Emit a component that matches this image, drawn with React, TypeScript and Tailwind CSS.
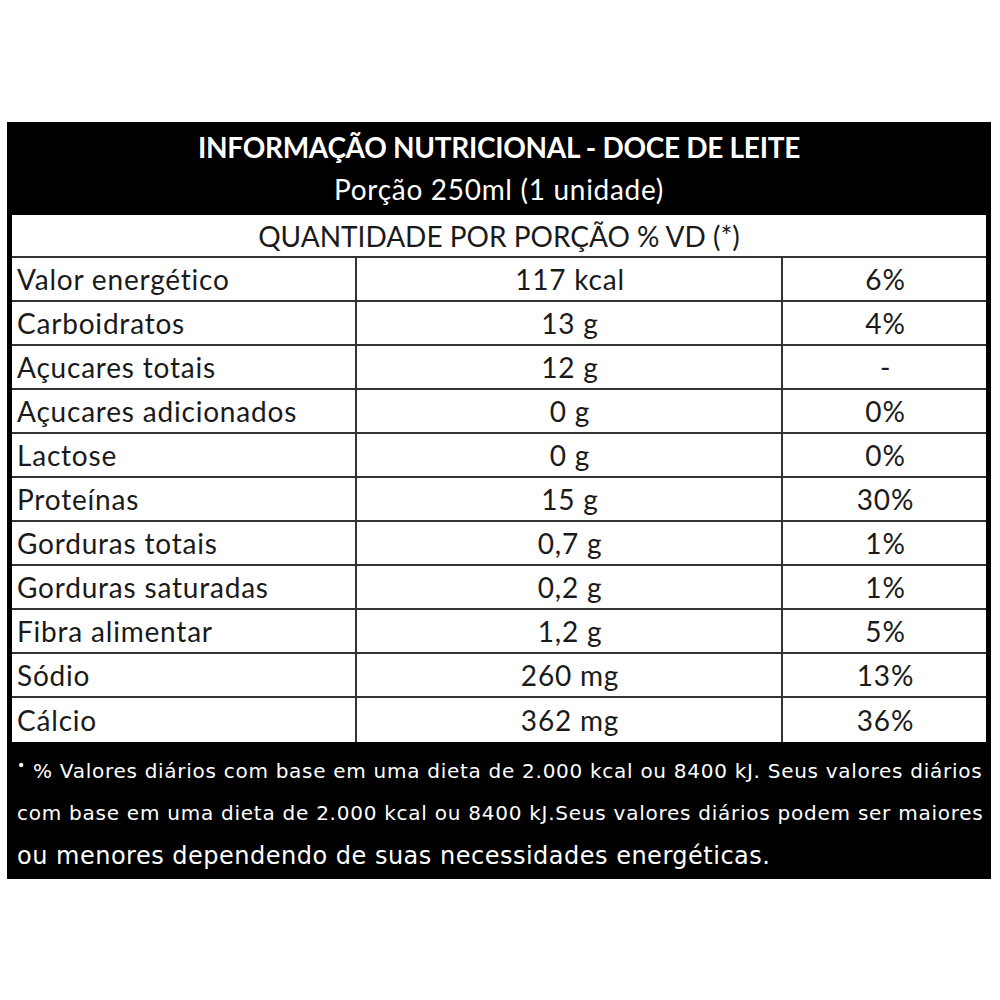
import React from "react";

const rows: [string, string, string][] = [
  ["Valor energético", "117 kcal", "6%"],
  ["Carboidratos", "13 g", "4%"],
  ["Açucares totais", "12 g", "-"],
  ["Açucares adicionados", "0 g", "0%"],
  ["Lactose", "0 g", "0%"],
  ["Proteínas", "15 g", "30%"],
  ["Gorduras totais", "0,7 g", "1%"],
  ["Gorduras saturadas", "0,2 g", "1%"],
  ["Fibra alimentar", "1,2 g", "5%"],
  ["Sódio", "260 mg", "13%"],
  ["Cálcio", "362 mg", "36%"],
];

export default function App() {
  return (
    <div className="w-[1000px] h-[1000px] bg-white pt-[122px] pl-[7px]">
      <div
        className="w-[984px] bg-black px-[5px] pb-[1px]"
        style={{ fontFamily: "Lato, 'Open Sans', sans-serif" }}
      >
        <div className="h-[93px] flex flex-col items-center text-white pt-[8px]">
          <div className="text-[28px] font-bold leading-[34px] tracking-[-0.3px]">
            INFORMAÇÃO NUTRICIONAL - DOCE DE LEITE
          </div>
          <div className="text-[28px] leading-[34px] mt-[8px] tracking-[0.7px]">Porção 250ml (1 unidade)</div>
        </div>
        <div className="bg-white text-[#1a1a1a]">
          <div className="h-[43px] flex items-center justify-center text-[28px] border-b-2 border-[#333]">
            QUANTIDADE POR PORÇÃO % VD (*)
          </div>
          {rows.map((r, i) => (
            <div
              key={i}
              className={`flex h-[44px] text-[28px] tracking-[0.8px] ${i < rows.length - 1 ? "border-b-2 border-[#333]" : ""}`}
            >
              <div className="w-[345px] border-r-2 border-[#333] flex items-center pl-[5px]">{r[0]}</div>
              <div className="w-[426px] border-r-2 border-[#333] flex items-center justify-center pl-[2px]">{r[1]}</div>
              <div className="flex-1 flex items-center justify-center pl-[2px]">{r[2]}</div>
            </div>
          ))}
        </div>
        <div
          className="h-[136px] text-white pl-[5px] pt-[8px]"
          style={{ fontFamily: "'DejaVu Sans', Verdana, sans-serif" }}
        >
          <div className="text-[20px] leading-[42px] whitespace-nowrap tracking-[0.72px]">
            <span className="text-[14px] align-top leading-[30px]">•</span> % Valores diários com base em uma dieta de 2.000 kcal ou 8400 kJ. Seus valores diários
          </div>
          <div className="text-[20px] leading-[42px] whitespace-nowrap tracking-[0.75px]">
            com base em uma dieta de 2.000 kcal ou 8400 kJ.Seus valores diários podem ser maiores
          </div>
          <div className="text-[24px] leading-[44px] whitespace-nowrap tracking-[0.5px]">
            ou menores dependendo de suas necessidades energéticas.
          </div>
        </div>
      </div>
    </div>
  );
}
